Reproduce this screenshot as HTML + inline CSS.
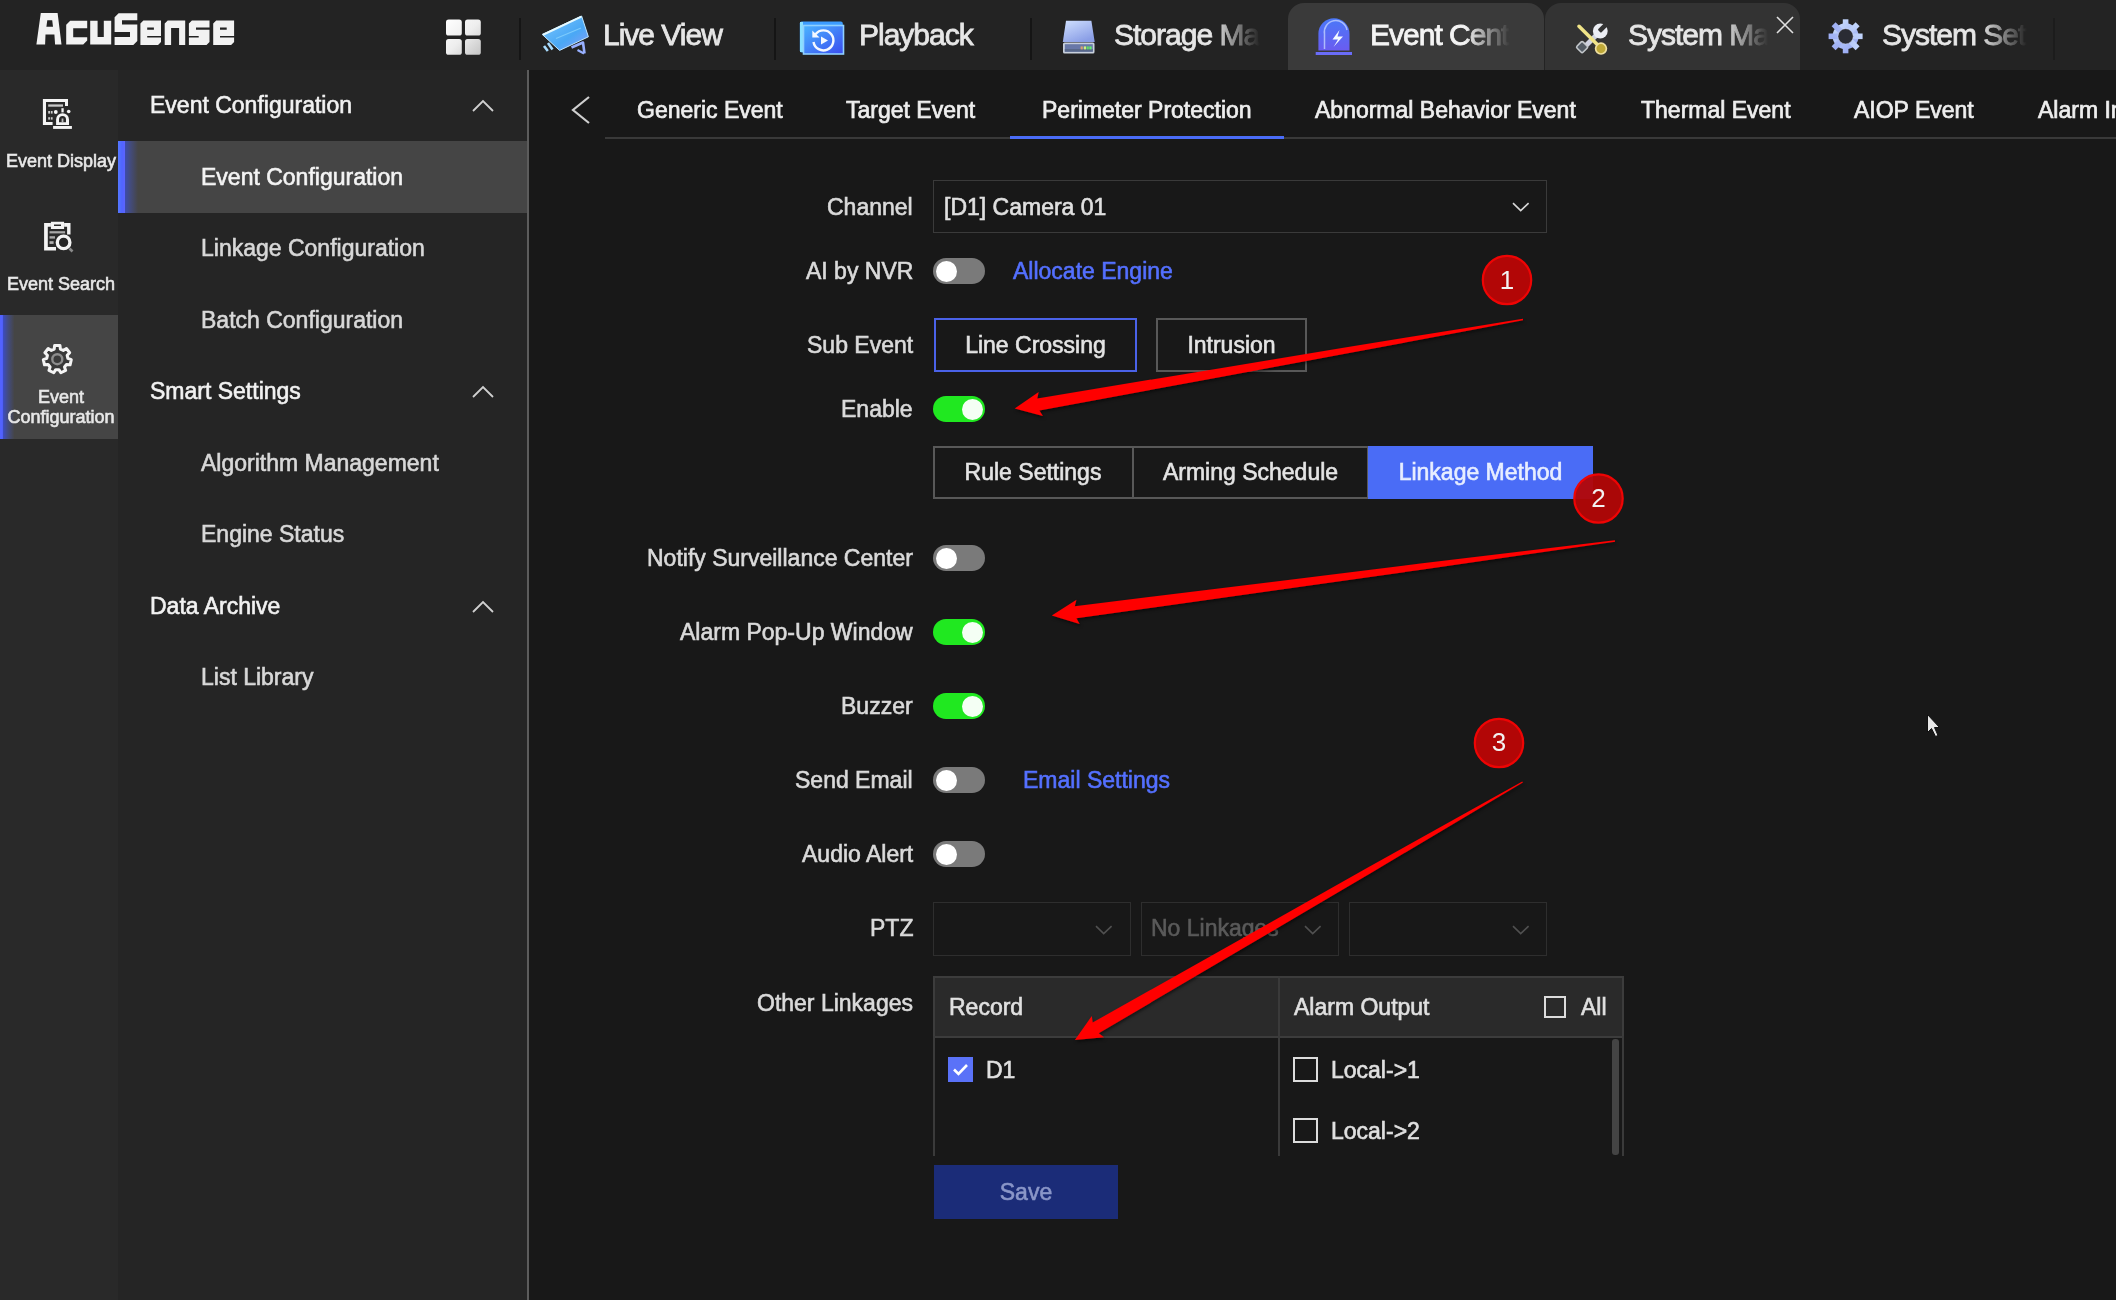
<!DOCTYPE html>
<html><head><meta charset="utf-8">
<style>
*{box-sizing:border-box;margin:0;padding:0}
html,body{width:2116px;height:1300px;overflow:hidden;background:#181818;font-family:"Liberation Sans",sans-serif;color:#dcdcdc}
.a{position:absolute;will-change:transform;-webkit-text-stroke:0.6px currentColor}
.t23{font-size:23px;line-height:26px;white-space:nowrap}
#hdr{left:0;top:0;width:2116px;height:70px;background:#232323}
#rail{left:0;top:70px;width:118px;height:1230px;background:#292929}
#menu{left:118px;top:70px;width:409px;height:1230px;background:#252525}
#vl{left:527px;top:70px;width:2px;height:1230px;background:#5c5c5c}
.sep{width:2px;height:42px;top:18px;background:#151515}
.htxt{font-size:30px;letter-spacing:-1px;line-height:36px;top:17px;color:#e6e6e6;white-space:nowrap;-webkit-text-stroke:0.8px currentColor}
.fade{-webkit-mask-image:linear-gradient(90deg,#000 68%,transparent 100%);mask-image:linear-gradient(90deg,#000 68%,transparent 100%)}
.mh{left:32px;font-size:23px;color:#f2f2f2;white-space:nowrap;height:26px;line-height:26px}
.mi{left:83px;font-size:23px;color:#d8d8d8;white-space:nowrap;height:26px;line-height:26px}
.chev{width:22px;height:13px}
.rtxt{font-size:18px;line-height:20px;color:#e8e8e8;text-align:center;width:118px;left:2px;white-space:nowrap}
.tab{font-size:23px;line-height:26px;top:97px;color:#eeeeee;white-space:nowrap;-webkit-text-stroke:0.7px currentColor}
.lbl{font-size:23px;line-height:26px;color:#dadada;white-space:nowrap;right:1203px;text-align:right}
.tg{width:52px;height:26px;border-radius:13px;background:#7a7a7a;left:933px}
.tg::after{content:"";position:absolute;left:2.5px;top:2.5px;width:21px;height:21px;border-radius:50%;background:#fff}
.tg.on{background:#20e820}
.tg.on::after{left:28.5px;background:#f4fff4}
.link{font-size:23px;line-height:26px;color:#5470ff;white-space:nowrap}
</style></head><body>
<div id="hdr" class="a"></div>
<div id="rail" class="a"></div>
<div id="menu" class="a"></div>
<div id="vl" class="a"></div>
<!-- HEADER -->
<svg class="a" style="left:0;top:0" width="260" height="70" viewBox="0 0 260 70">
<g fill="#f2f2f2" fill-rule="evenodd">
<path d="M40.8 12.9H57.6L61.5 44.6H55.1L54.4 34.6H45.5L45.1 44.6H36.4Z M47.3 20.3H52.2L53 26.7H46.4Z"/>
<path d="M70.2 20.8H87.2V28.2H73.2V37.3H87.2V40.6L83.2 44.6H66.2V24.8Z"/>
<path d="M90.2 20.8H97.6V36.9H103.8V20.8H111.2V44.6H90.2Z"/>
<path d="M118.6 13.2H137.3V20.3H122V24.6H137.3V40.9L133.3 44.9H114.6V36.9H130V32H114.6V17.2Z"/>
<path d="M143.4 20.6H161V36H147.2V37.6H161V41.9L158 44.9H140.4V23.6Z M147.2 27.6H153.9V29.8H147.2Z"/>
<path d="M167.7 20.6H185.2V44.9H179.1V28H171.1V44.9H164.7V23.6Z"/>
<path d="M191.9 20.6H209.5V27.6H196V29.8H209.5V41.9L206.5 44.9H188.9V37.6H198.7V36H188.9V23.6Z"/>
<path d="M216.2 20.6H234.1V36H220V37.6H234.1V41.9L231.1 44.9H213.2V23.6Z M220 27.6H226.7V29.8H220Z"/>
</g></svg>

<!-- grid icon -->
<svg class="a" style="left:440px;top:14px" width="46" height="46" viewBox="0 0 46 46">
<defs><linearGradient id="gg" gradientUnits="userSpaceOnUse" x1="6" y1="5" x2="41" y2="41"><stop offset="0" stop-color="#ffffff"/><stop offset="0.5" stop-color="#eeeeee"/><stop offset="1" stop-color="#c4c4c4"/></linearGradient></defs>
<rect x="6" y="5.6" width="15.8" height="15.9" rx="2.6" fill="url(#gg)"/>
<rect x="25" y="5.6" width="15.8" height="15.9" rx="2.6" fill="url(#gg)"/>
<rect x="6" y="24.9" width="15.8" height="15.9" rx="2.6" fill="url(#gg)"/>
<rect x="25" y="24.9" width="15.8" height="15.9" rx="2.6" fill="url(#gg)"/>
</svg>
<div class="a sep" style="left:519px"></div>

<!-- live view icon -->
<svg class="a" style="left:536px;top:10px" width="60" height="52" viewBox="536 10 60 52">
<defs><linearGradient id="cam" x1="0" y1="0" x2="1" y2="1"><stop offset="0" stop-color="#7cc8ff"/><stop offset="0.6" stop-color="#4aa8f5"/><stop offset="1" stop-color="#8c9cf8"/></linearGradient></defs>
<path d="M542.2 34.4L581.6 16L588.4 36.8L559.6 50.4Z" fill="url(#cam)" stroke="#bfe6ff" stroke-width="1"/>
<path d="M543 34.8L581.4 16.6" stroke="#e6faff" stroke-width="2"/>
<path d="M548 43L552.5 49.5" stroke="#a8dcff" stroke-width="2.6"/>
<path d="M544 46L547.8 51" stroke="#a8dcff" stroke-width="2.6"/>
<path d="M571.5 47.5L583 42.5L584.5 53.5" fill="none" stroke="#98b0ff" stroke-width="2.6" stroke-linejoin="round"/>
<path d="M577.5 50L584 53.5" stroke="#98b0ff" stroke-width="2.2"/>
<path d="M556 38.5L581 28" stroke="#8ed8ff" stroke-width="1.2" opacity="0.7"/>
</svg>
<div class="a htxt" style="left:603px">Live View</div>
<div class="a sep" style="left:774px"></div>

<!-- playback icon -->
<svg class="a" style="left:792px;top:14px" width="60" height="48" viewBox="792 14 60 48">
<defs><linearGradient id="pb" x1="0" y1="0" x2="1" y2="1"><stop offset="0" stop-color="#4ab4ff"/><stop offset="1" stop-color="#3a4cf0"/></linearGradient></defs>
<rect x="799.8" y="21.4" width="43" height="31" rx="2" fill="#3c9cff"/>
<rect x="800" y="22" width="3" height="30" fill="#8ae0ff"/>
<rect x="803.5" y="25.5" width="40" height="28.5" fill="url(#pb)" stroke="#8fd0ff" stroke-width="1.6"/>
<path d="M815.5 34.2A10 10 0 1 1 813.5 42" fill="none" stroke="#f4f8ff" stroke-width="2.4"/>
<path d="M812.3 30.5L812.3 37.5L819.5 37.5Z" fill="#f4f8ff"/>
<path d="M821 36.5L828 40.5L821 44.5Z" fill="#f4f8ff"/>
</svg>
<div class="a htxt" style="left:859px">Playback</div>
<div class="a sep" style="left:1030px"></div>

<!-- storage icon -->
<svg class="a" style="left:1055px;top:14px" width="48" height="48" viewBox="1055 14 48 48">
<defs><linearGradient id="hd" x1="0" y1="0" x2="0.6" y2="1"><stop offset="0" stop-color="#d0e0ff"/><stop offset="1" stop-color="#8a9ee6"/></linearGradient>
<linearGradient id="led" x1="0" y1="0" x2="1" y2="0"><stop offset="0" stop-color="#6a7cb0"/><stop offset="0.55" stop-color="#6a7cb0"/><stop offset="0.7" stop-color="#c0e070"/><stop offset="1" stop-color="#40e060"/></linearGradient></defs>
<path d="M1066 20.8H1091.4L1094.7 42H1062.8Z" fill="url(#hd)"/>
<rect x="1063" y="42.5" width="31.5" height="11" rx="1.5" fill="#c8d0dc"/>
<rect x="1064.8" y="44.2" width="28" height="7.5" fill="#6878a8"/>
<rect x="1064.8" y="49" width="28" height="2.7" fill="#58688a"/>
<rect x="1080.6" y="46.4" width="2.2" height="3" fill="#d8a070"/>
<rect x="1083.8" y="46.4" width="2.2" height="3" fill="#d0f080"/>
<rect x="1086.6" y="46.4" width="2.2" height="3" fill="#60e060"/>
<rect x="1089.4" y="46.4" width="2.2" height="3" fill="#60f070"/>
</svg>
<div class="a htxt fade" style="left:1114px;width:146px;overflow:hidden">Storage Manage</div>

<!-- event center tab -->
<div class="a" style="left:1288px;top:3px;width:256px;height:67px;background:#3a3a3a;border-radius:16px 16px 0 0"></div>
<svg class="a" style="left:1308px;top:12px" width="52" height="50" viewBox="1308 12 52 50">
<defs><linearGradient id="ev" x1="0" y1="0" x2="0" y2="1"><stop offset="0" stop-color="#4a78f8"/><stop offset="1" stop-color="#6a5cf0"/></linearGradient></defs>
<path d="M1318.4 50.5V33.8A15.5 15.5 0 0 1 1349.5 33.8V50.5Z" fill="url(#ev)"/>
<path d="M1324.5 49V34A11 11 0 0 1 1347 30" fill="none" stroke="#c0d0ff" stroke-width="1.5" opacity="0.8"/>
<rect x="1315.7" y="52" width="36.3" height="3" fill="#6a6cf8"/>
<path d="M1339.5 30L1332.5 39.5H1338L1333.5 47L1343 36.5H1337.5Z" fill="#f4fbff"/>
</svg>
<div class="a htxt fade" style="left:1370px;width:140px;overflow:hidden;color:#f4f4f4">Event Center</div>

<!-- system maintenance tab -->
<div class="a" style="left:1545px;top:3px;width:255px;height:67px;background:#333;border-radius:16px 16px 0 0"></div>
<svg class="a" style="left:1568px;top:16px" width="48" height="46" viewBox="1568 16 48 46">
<path d="M1597 34.5L1586 45.5" stroke="#cfd2e0" stroke-width="5"/>
<circle cx="1600.3" cy="31" r="7.4" fill="#eceef4"/>
<rect x="1597.6" y="20" width="4.6" height="11.5" rx="1" transform="rotate(45 1599.9 30.6)" fill="#333"/>
<rect x="1577.8" y="42.8" width="8.6" height="8.6" rx="1.6" transform="rotate(45 1582.1 47.1)" fill="#535b64" stroke="#c4c8cc" stroke-width="1.6"/>
<path d="M1579 26.3L1597 44.3" stroke="#f0e488" stroke-width="3.6" stroke-linecap="round"/>
<circle cx="1601" cy="48.6" r="5.4" fill="#bea838" stroke="#efe0a0" stroke-width="1.7"/>
</svg>
<div class="a htxt fade" style="left:1628px;width:140px;overflow:hidden">System Maintenance</div>
<svg class="a" style="left:1776px;top:16px" width="18" height="18" viewBox="0 0 18 18"><path d="M1 1L17 17M17 1L1 17" stroke="#e0e0e0" stroke-width="1.6"/></svg>

<!-- system settings -->
<svg class="a" style="left:1822px;top:14px" width="48" height="48" viewBox="1822 14 48 48">
<defs><linearGradient id="gr" gradientUnits="userSpaceOnUse" x1="1830" y1="20" x2="1862" y2="54"><stop offset="0" stop-color="#d0e4ff"/><stop offset="1" stop-color="#8c9cf0"/></linearGradient></defs>
<g fill="url(#gr)">
<circle cx="1845.6" cy="36.3" r="13"/>
<rect x="1842.8" y="19.3" width="5.6" height="34" transform="rotate(0 1845.6 36.3)"/>
<rect x="1842.8" y="19.3" width="5.6" height="34" transform="rotate(45 1845.6 36.3)"/>
<rect x="1842.8" y="19.3" width="5.6" height="34" transform="rotate(90 1845.6 36.3)"/>
<rect x="1842.8" y="19.3" width="5.6" height="34" transform="rotate(135 1845.6 36.3)"/>
</g>
<circle cx="1845.6" cy="36.3" r="7.6" fill="#2a2c34" stroke="#e0e8ff" stroke-width="0.8" stroke-opacity="0.5"/>
</svg>
<div class="a htxt fade" style="left:1882px;width:145px;overflow:hidden">System Settings</div>
<div class="a sep" style="left:2053px;background:#1c1c1c"></div>
<!-- RAIL -->
<svg class="a" style="left:36px;top:92px" width="44" height="44" viewBox="36 92 44 44">
<g fill="#f4f4f4">
<path d="M42.9 98.9H68V105.9H65V101.9H46V122H52.6V125H42.9Z"/>
<rect x="48.2" y="104.4" width="14.8" height="2.3" fill="#c8c8c8"/>
<rect x="48.2" y="111" width="1.8" height="2.6" fill="#c8c8c8"/><rect x="50.8" y="111" width="1.8" height="2.6" fill="#c8c8c8"/>
<rect x="48.2" y="117.2" width="1.8" height="2.4" fill="#c8c8c8"/><rect x="50.8" y="117.2" width="1.8" height="2.4" fill="#c8c8c8"/>
<circle cx="55.8" cy="112" r="1.9"/>
<circle cx="68.7" cy="111.5" r="1.8"/>
<rect x="61.4" y="108.2" width="2.3" height="4.2"/>
<path d="M56.1 125V119.6A6.45 6.45 0 0 1 69 119.6V125ZM59 122.2H66V119.6A3.5 3.5 0 0 0 59 119.6Z" fill-rule="evenodd"/>
<rect x="61.6" y="118.5" width="1.8" height="3.5" fill="#b8b8b8"/>
<rect x="53.1" y="126" width="18.8" height="2.9"/>
</g>
</svg>
<div class="a rtxt" style="top:151px">Event Display</div>

<svg class="a" style="left:36px;top:215px" width="44" height="44" viewBox="36 215 44 44">
<g fill="#f4f4f4">
<path d="M44.1 223H50.9V226.8H47.8V246.9H56V250.5H44.1Z"/>
<path d="M64.1 223H70.5V234.6H67.1V226.8H64.1Z"/>
<path d="M50.9 221.8H64.1V228.9H50.9ZM54 224.6V225.9H61V224.6Z" fill-rule="evenodd"/>
<rect x="49.5" y="231.2" width="15.6" height="2.2" fill="#a8a8a8"/>
<rect x="49.5" y="236.2" width="5.5" height="2.4" fill="#a8a8a8"/>
<rect x="49.5" y="241.2" width="4.1" height="2.7" fill="#b0b0b0"/>
</g>
<circle cx="63.6" cy="242.4" r="6.3" fill="#262626" stroke="#f4f4f4" stroke-width="3.3"/>
<path d="M69.5 248.5L72.5 251.5" stroke="#8a8a8a" stroke-width="2.6"/>
</svg>
<div class="a rtxt" style="top:274px">Event Search</div>

<div class="a" style="left:0;top:315px;width:118px;height:124px;background:linear-gradient(90deg,#5262ff 0,#5262ff 2.4px,#3c4cc0 3.2px,#434c80 8px,#454545 14.5px,#454545 100%)"></div>
<svg class="a" style="left:36px;top:337px" width="44" height="44" viewBox="36 337 44 44">
<path d="M54.20 349.06 L54.63 345.46 L59.97 345.46 L60.40 349.06 L63.29 350.46 L66.38 348.54 L69.71 352.72 L67.16 355.30 L67.87 358.43 L71.29 359.65 L70.10 364.86 L66.49 364.48 L64.49 366.99 L65.67 370.42 L60.86 372.74 L58.91 369.68 L55.69 369.68 L53.74 372.74 L48.93 370.42 L50.11 366.99 L48.11 364.48 L44.50 364.86 L43.31 359.65 L46.73 358.43 L47.44 355.30 L44.89 352.72 L48.22 348.54 L51.31 350.46Z" fill="#383838" stroke="#f4f4f4" stroke-width="3" stroke-linejoin="round"/>
<circle cx="57.3" cy="359.2" r="5" fill="#3a3a3a" stroke="#8c8c8c" stroke-width="2.4"/>
</svg>
<div class="a rtxt" style="top:387px">Event</div>
<div class="a rtxt" style="top:407px">Configuration</div>

<!-- MENU -->
<div class="a mh" style="top:92px;left:150px">Event Configuration</div>
<svg class="a chev" style="left:472px;top:99px" viewBox="0 0 22 13"><path d="M1 12L11 2L21 12" fill="none" stroke="#d0d0d0" stroke-width="1.8"/></svg>
<div class="a" style="left:118px;top:141px;width:409px;height:72px;background:linear-gradient(90deg,#5478ff 0,#5064ff 4px,#5c64ff 7px,#3e4ca8 7.5px,#434c80 12px,#454545 20px,#454545 100%)"></div>
<div class="a mi" style="top:164px;left:201px;color:#f4f4f4">Event Configuration</div>
<div class="a mi" style="top:235px;left:201px">Linkage Configuration</div>
<div class="a mi" style="top:307px;left:201px">Batch Configuration</div>
<div class="a mh" style="top:378px;left:150px">Smart Settings</div>
<svg class="a chev" style="left:472px;top:385px" viewBox="0 0 22 13"><path d="M1 12L11 2L21 12" fill="none" stroke="#d0d0d0" stroke-width="1.8"/></svg>
<div class="a mi" style="top:450px;left:201px">Algorithm Management</div>
<div class="a mi" style="top:521px;left:201px">Engine Status</div>
<div class="a mh" style="top:593px;left:150px">Data Archive</div>
<svg class="a chev" style="left:472px;top:600px" viewBox="0 0 22 13"><path d="M1 12L11 2L21 12" fill="none" stroke="#d0d0d0" stroke-width="1.8"/></svg>
<div class="a mi" style="top:664px;left:201px">List Library</div>
<!-- SUBTABS -->
<svg class="a" style="left:568px;top:94px" width="26" height="32" viewBox="0 0 26 32"><path d="M21 3L5 16L21 29" fill="none" stroke="#cfcfcf" stroke-width="2.2"/></svg>
<div class="a" style="left:605px;top:137px;width:1511px;height:2px;background:#393939"></div>
<div class="a tab" style="left:637px">Generic Event</div>
<div class="a tab" style="left:846px">Target Event</div>
<div class="a tab" style="left:1042px">Perimeter Protection</div>
<div class="a tab" style="left:1315px">Abnormal Behavior Event</div>
<div class="a tab" style="left:1641px">Thermal Event</div>
<div class="a tab" style="left:1854px">AIOP Event</div>
<div class="a tab" style="left:2038px">Alarm Input</div>
<div class="a" style="left:1010px;top:136px;width:274px;height:3px;background:#4a6cf7"></div>

<!-- FORM -->
<div class="a lbl" style="top:194px">Channel</div>
<div class="a" style="left:933px;top:180px;width:614px;height:53px;border:1.5px solid #3a3a3a"></div>
<div class="a t23" style="left:944px;top:194px;color:#e0e0e0">[D1] Camera 01</div>
<svg class="a" style="left:1510px;top:199px" width="20" height="14" viewBox="0 0 20 14"><path d="M3 4.2L10.7 11.6L18.6 4.2" fill="none" stroke="#d8d8d8" stroke-width="1.6"/></svg>

<div class="a lbl" style="top:258px">AI by NVR</div>
<div class="a tg" style="top:258px"></div>
<div class="a link" style="left:1013px;top:258px">Allocate Engine</div>

<div class="a lbl" style="top:332px">Sub Event</div>
<div class="a t23" style="left:934px;top:318px;width:203px;height:54px;border:2px solid #4a62e8;text-align:center;line-height:50px;color:#e4e4e4">Line Crossing</div>
<div class="a t23" style="left:1156px;top:318px;width:151px;height:54px;border:2px solid #585858;text-align:center;line-height:50px;color:#e4e4e4">Intrusion</div>

<div class="a lbl" style="top:396px">Enable</div>
<div class="a tg on" style="top:396px"></div>

<div class="a" style="left:933px;top:446px;width:436px;height:53px;border:2px solid #585858"></div>
<div class="a" style="left:1132px;top:446px;width:2px;height:53px;background:#585858"></div>
<div class="a t23" style="left:933px;top:446px;width:200px;height:53px;text-align:center;line-height:53px;color:#e4e4e4">Rule Settings</div>
<div class="a t23" style="left:1133px;top:446px;width:235px;height:53px;text-align:center;line-height:53px;color:#e4e4e4">Arming Schedule</div>
<div class="a t23" style="left:1368px;top:446px;width:225px;height:53px;background:#4a6cf6;text-align:center;line-height:53px;color:#e8eeff">Linkage Method</div>

<div class="a lbl" style="top:545px">Notify Surveillance Center</div>
<div class="a tg" style="top:545px"></div>
<div class="a lbl" style="top:619px">Alarm Pop-Up Window</div>
<div class="a tg on" style="top:619px"></div>
<div class="a lbl" style="top:693px">Buzzer</div>
<div class="a tg on" style="top:693px"></div>
<div class="a lbl" style="top:767px">Send Email</div>
<div class="a tg" style="top:767px"></div>
<div class="a link" style="left:1023px;top:767px">Email Settings</div>
<div class="a lbl" style="top:841px">Audio Alert</div>
<div class="a tg" style="top:841px"></div>

<div class="a lbl" style="top:915px">PTZ</div>
<div class="a" style="left:933px;top:902px;width:198px;height:54px;border:1.5px solid #2e2e2e"></div>
<div class="a" style="left:1141px;top:902px;width:198px;height:54px;border:1.5px solid #2e2e2e"></div>
<div class="a" style="left:1349px;top:902px;width:198px;height:54px;border:1.5px solid #2e2e2e"></div>
<div class="a t23" style="left:1151px;top:915px;color:#5a5a5a">No Linkages</div>
<svg class="a" style="left:1093px;top:922px" width="20" height="14" viewBox="0 0 20 14"><path d="M3 4.2L10.7 11.6L18.6 4.2" fill="none" stroke="#505050" stroke-width="1.6"/></svg>
<svg class="a" style="left:1302px;top:922px" width="20" height="14" viewBox="0 0 20 14"><path d="M3 4.2L10.7 11.6L18.6 4.2" fill="none" stroke="#505050" stroke-width="1.6"/></svg>
<svg class="a" style="left:1510px;top:922px" width="20" height="14" viewBox="0 0 20 14"><path d="M3 4.2L10.7 11.6L18.6 4.2" fill="none" stroke="#505050" stroke-width="1.6"/></svg>

<div class="a lbl" style="top:990px">Other Linkages</div>
<div class="a" style="left:933px;top:976px;width:691px;height:62px;background:#2a2a2a;border:2px solid #3c3c3c"></div>
<div class="a" style="left:933px;top:1036px;width:2px;height:120px;background:#3a3a3a"></div>
<div class="a" style="left:1622px;top:1036px;width:2px;height:120px;background:#3a3a3a"></div>
<div class="a" style="left:1278px;top:976px;width:2px;height:180px;background:#3a3a3a"></div>
<div class="a t23" style="left:949px;top:994px;color:#e0e0e0">Record</div>
<div class="a t23" style="left:1294px;top:994px;color:#e0e0e0">Alarm Output</div>
<div class="a" style="left:1544px;top:996px;width:22px;height:22px;border:2.5px solid #dcdcdc"></div>
<div class="a t23" style="left:1581px;top:994px;color:#e0e0e0">All</div>
<div class="a" style="left:1612px;top:1039px;width:7px;height:116px;background:#444;border-radius:3px"></div>

<svg class="a" style="left:948px;top:1057px" width="25" height="25" viewBox="0 0 25 25"><rect width="25" height="25" fill="#5a72f8"/><path d="M6 12.5L10.5 17L19 8" fill="none" stroke="#fff" stroke-width="2.6"/></svg>
<div class="a t23" style="left:986px;top:1057px;color:#e0e0e0">D1</div>
<div class="a" style="left:1293px;top:1057px;width:25px;height:25px;border:2.5px solid #dcdcdc"></div>
<div class="a t23" style="left:1331px;top:1057px;color:#e0e0e0">Local-&gt;1</div>
<div class="a" style="left:1293px;top:1118px;width:25px;height:25px;border:2.5px solid #dcdcdc"></div>
<div class="a t23" style="left:1331px;top:1118px;color:#e0e0e0">Local-&gt;2</div>

<div class="a t23" style="left:934px;top:1165px;width:184px;height:54px;background:#1b2c78;text-align:center;line-height:54px;color:#8a96c8">Save</div>

<!-- cursor -->
<svg class="a" style="left:1920px;top:710px" width="20" height="30" viewBox="0 0 20 30"><path d="M7.5 4.5V22.5L11.5 18.5L15.5 26.5L18 25.5L14.5 17.5H19.5Z" fill="#e8e8e8" stroke="#111" stroke-width="1"/></svg>

<!-- ANNOTATIONS -->
<svg class="a" style="left:0;top:0" width="2116" height="1300" viewBox="0 0 2116 1300">
<defs><filter id="sh" x="-10%" y="-10%" width="120%" height="120%"><feDropShadow dx="1" dy="2" stdDeviation="1.5" flood-color="#000" flood-opacity="0.5"/></filter></defs>
<g fill="#ff0000" filter="url(#sh)">
<path d="M1522.9 318.8 L1464.6 328.2 L1348.0 347.0 L1221.8 367.9 L1037.3 398.4 L1038.7 392.0 L1014.7 408.6 L1042.9 416.0 L1039.4 410.5 L1223.3 376.4 L1349.1 353.1 L1465.1 331.2 L1523.1 320.2Z"/>
<path d="M1614.9 540.3 L1550.1 548.1 L1420.4 563.6 L1280.0 580.9 L1074.8 606.2 L1076.5 599.8 L1051.8 615.4 L1079.7 624.0 L1076.4 618.3 L1281.1 589.4 L1421.2 569.7 L1550.5 551.0 L1615.1 541.7Z"/>
<path d="M1522.3 781.4 L1470.6 810.2 L1367.4 867.8 L1255.8 930.7 L1092.7 1022.6 L1091.8 1016.1 L1074.9 1039.9 L1104.0 1037.2 L1098.7 1033.2 L1260.1 938.2 L1370.5 873.2 L1472.1 812.8 L1522.9 782.6Z"/>
</g>
<g font-family="Liberation Sans" font-size="26" fill="#f2f2f2" text-anchor="middle">
<circle cx="1507" cy="280" r="24.2" fill="#b20606" stroke="#ee0404" stroke-width="2.2"/>
<text x="1507" y="288.5">1</text>
<circle cx="1598.5" cy="498.5" r="24.2" fill="#b20606" fill-opacity="0.95" stroke="#ee0404" stroke-width="2.2"/>
<text x="1598.5" y="507">2</text>
<circle cx="1499" cy="743" r="24.2" fill="#b20606" stroke="#ee0404" stroke-width="2.2"/>
<text x="1499" y="751">3</text>
</g>
</svg>
</body></html>
